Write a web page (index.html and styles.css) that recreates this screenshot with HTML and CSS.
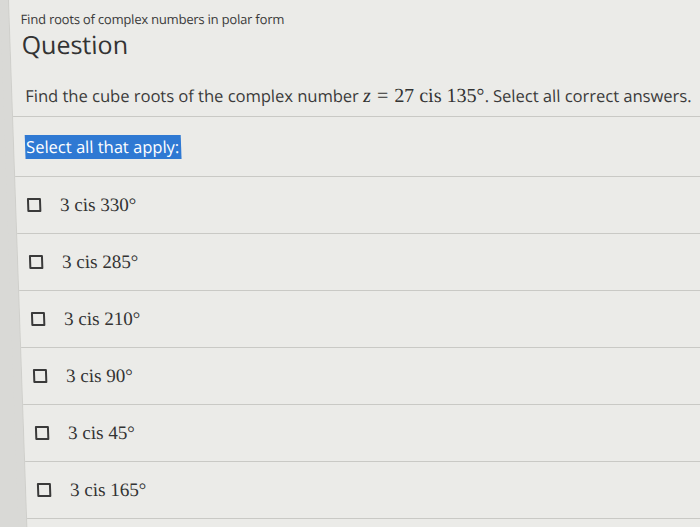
FILE: index.html
```html
<!DOCTYPE html>
<html>
<head>
<meta charset="utf-8">
<link rel="stylesheet" href="styles.css">
</head>
<body>
<div class="sheet">
  <div class="strip"></div>
  <div class="main">
    <header class="head">
      <div class="crumb">Find roots of complex numbers in polar form</div>
      <h1 class="title">Question</h1>
      <p class="prompt">Find the cube roots of the complex number <span class="math big"><i>z</i><span class="rel">=</span>27 cis 135°</span>. Select all correct answers.</p>
    </header>
    <div class="instr"><span class="hl">Select all that apply:</span></div>
    <ul class="opts">
      <li class="opt"><span class="box"></span><span class="math">3 cis 330°</span></li>
      <li class="opt"><span class="box"></span><span class="math">3 cis 285°</span></li>
      <li class="opt"><span class="box"></span><span class="math">3 cis 210°</span></li>
      <li class="opt"><span class="box"></span><span class="math">3 cis 90°</span></li>
      <li class="opt"><span class="box"></span><span class="math">3 cis 45°</span></li>
      <li class="opt"><span class="box"></span><span class="math">3 cis 165°</span></li>
    </ul>
  </div>
</div>
</body>
</html>
```
FILE: styles.css
```css
html, body {
  margin: 0;
  padding: 0;
  background: #d9d9d6;
  overflow: hidden;
  width: 700px;
  height: 527px;
}
.sheet {
  display: flex;
  width: 740px;
  min-height: 560px;
  transform: skewX(2deg);
  transform-origin: 0 0;
  font-family: "Open Sans", "DejaVu Sans", sans-serif;
  color: #3a3a3a;
}
.strip {
  width: 8px;
  flex: none;
  background: #d9d9d6;
  border-right: 1px solid #cfcfcb;
}
.main {
  flex: 1;
  background: #ebebe8;
}
.head {
  padding: 9px 0 8px 11px;
  border-bottom: 1px solid #c9c9c5;
}
.crumb {
  font-size: 13px;
  line-height: 20px;
  letter-spacing: -0.2px;
}
.title {
  margin: -1px 0 0;
  font-size: 25px;
  font-weight: 400;
  line-height: 32px;
  color: #333;
}
.prompt {
  margin: 23px 0 0 2px;
  font-size: 16.5px;
  line-height: 24px;
  white-space: nowrap;
}
.math {
  font-family: "Liberation Serif", "Times New Roman", serif;
  font-size: 19px;
  letter-spacing: 0;
  color: #333;
}
.math.big {
  font-size: 20px;
}
.math i {
  font-style: italic;
}
.rel {
  margin: 0 6px;
}
.instr {
  padding: 18px 0 17px 11px;
  border-bottom: 1px solid #c9c9c5;
}
.hl {
  display: inline-block;
  background: #2f79d3;
  color: #fff;
  font-size: 16.5px;
  line-height: 24px;
  padding: 0 2px 0 1px;
}
.opts {
  list-style: none;
  margin: 0;
  padding: 0;
}
.opt {
  display: flex;
  align-items: center;
  gap: 19px;
  height: 56px;
  padding-left: 11px;
  border-bottom: 1px solid #c9c9c5;
}
.box {
  width: 10px;
  height: 10px;
  border: 2px solid #3a3a3a;
  border-radius: 1px;
  flex: none;
}
```
